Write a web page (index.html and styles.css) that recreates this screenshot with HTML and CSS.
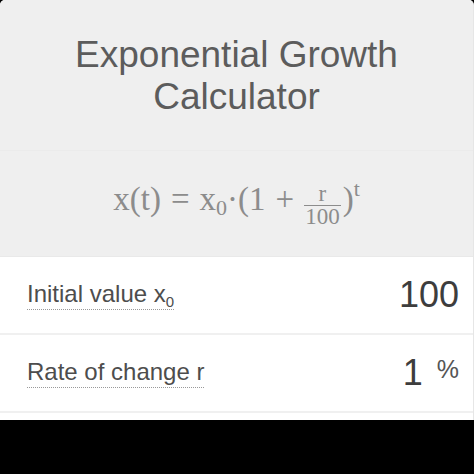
FILE: index.html
```html
<!DOCTYPE html>
<html lang="en">
<head>
    <meta charset="UTF-8">
    <meta name="viewport" content="width=device-width, initial-scale=1.0">
    <title>Exponential Growth Calculator</title>
    <link rel="stylesheet" href="styles.css">
</head>
<body>

<div class="calculator">
    <div class="calc-header">
        <h1 class="calc-title">Exponential Growth Calculator</h1>
        <div class="formula">
            <span>x(t)</span>
            <span class="op">=</span>
            <span>x<sub>0</sub>·(1</span>
            <span class="op">+</span>
            <span class="fraction">
                <span class="num">r</span>
                <span class="den">100</span>
            </span><span>)<sup>t</sup></span>
        </div>
    </div>

    <div class="calc-row">
        <span class="row-label">Initial value x<sub>0</sub></span>
        <span class="row-value">100</span>
    </div>
    <div class="calc-row">
        <span class="row-label">Rate of change r</span>
        <span class="row-value">1 <span class="unit">%</span></span>
    </div>
</div>

</body>
</html>
```

FILE: styles.css
```css
body {
    margin: 0;
    background-color: #000;
    font-family: "Liberation Sans", Arial, sans-serif;
}

.calculator {
    width: 473px;
    height: 420px;
    background-color: white;
    border-radius: 5px 5px 0 0;
    overflow: hidden;
    border-right: 1px solid #e6e6e6;
}

.calc-header {
    background-color: #efefef;
    border-bottom: 1px solid #e9e9e9;
}

.calc-title {
    margin: 0;
    padding: 34px 60px 32px;
    font-size: 37px;
    line-height: 42px;
    font-weight: normal;
    color: #5c5c5c;
    text-align: center;
    border-bottom: 1px solid #ebebeb;
}

.formula {
    height: 105px;
    display: flex;
    justify-content: center;
    align-items: center;
    padding-bottom: 8px;
    box-sizing: border-box;
    font-family: "Liberation Serif", "Times New Roman", serif;
    font-size: 33px;
    color: #8c8c8c;
    white-space: nowrap;
}

.formula sub {
    font-size: 22px;
    vertical-align: -5px;
    line-height: 0;
}

.formula sup {
    font-size: 22px;
    vertical-align: 14px;
    line-height: 0;
}

.formula .op {
    margin: 0 10px;
}

.fraction {
    display: inline-flex;
    flex-direction: column;
    align-items: center;
    font-size: 23px;
    line-height: 21px;
    margin: 0 2px 0 0;
    transform: translateY(5px);
}

.fraction .num {
    border-bottom: 1px solid #8c8c8c;
    width: 100%;
    text-align: center;
    padding-bottom: 1px;
}

.fraction .den {
    padding: 0 1px;
}

.calc-row {
    height: 76px;
    display: flex;
    justify-content: space-between;
    align-items: center;
    padding: 0 14px 0 27px;
    border-bottom: 2px solid #f0f0f0;
}

.row-label {
    font-size: 24px;
    color: #4d4d4d;
    border-bottom: 1px dotted #999;
    line-height: 28px;
    padding-bottom: 1px;
}

.row-label sub {
    font-size: 15px;
    vertical-align: -5px;
    line-height: 0;
}

.row-value {
    font-size: 36px;
    color: #3d3d3d;
}

.unit {
    font-size: 25px;
    color: #555;
    vertical-align: 7px;
    margin-left: 4px;
}
```
